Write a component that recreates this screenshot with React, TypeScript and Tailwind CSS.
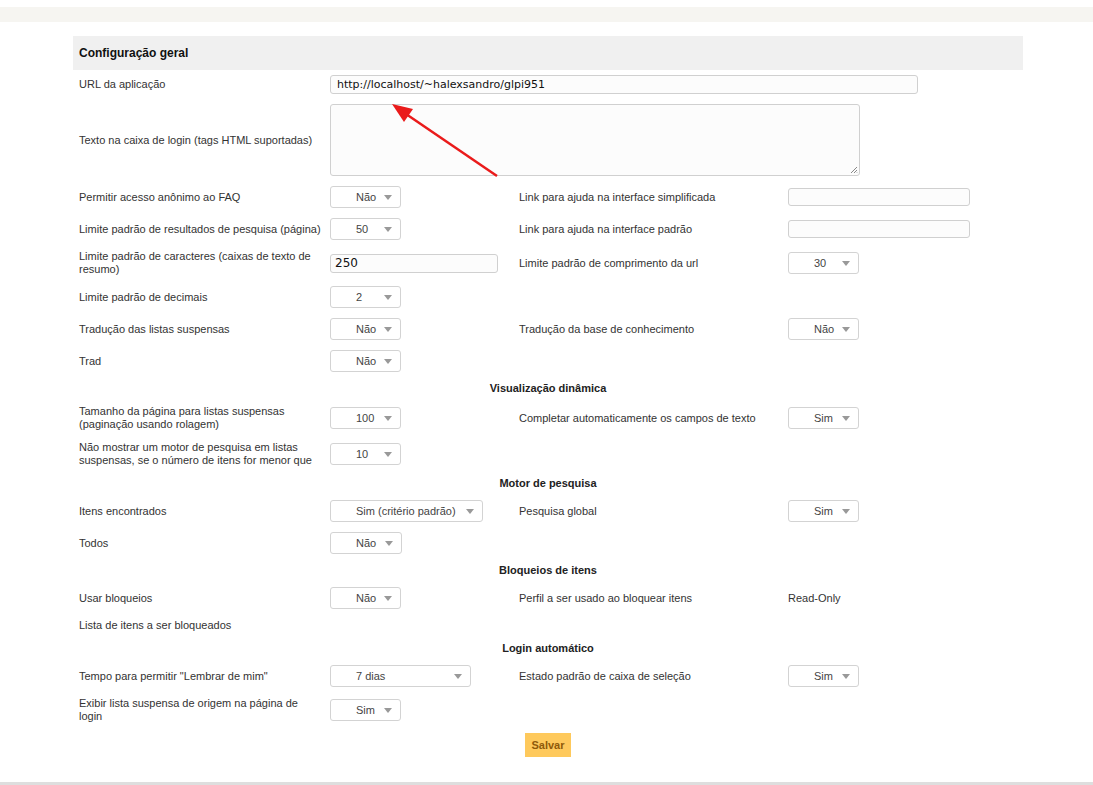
import React from "react";

const Arrow = () => (
  <svg width="8" height="5" viewBox="0 0 8 5" className="shrink-0">
    <path d="M0 0 L8 0 L4 5 Z" fill="#999" />
  </svg>
);

const Select = ({ value, w = "w-[71px]" }: { value: string; w?: string }) => (
  <div
    className={`${w} h-[22px] flex items-center justify-between pl-[25px] pr-[8px] bg-white border border-[#d3d3d3] rounded-[3px] text-[#444] text-[11px]`}
  >
    <span className="whitespace-nowrap">{value}</span>
    <Arrow />
  </div>
);

const TextInput = ({ value = "", w }: { value?: string; w: string }) => (
  <div
    className={`${w} h-[18px] flex items-center px-[5px] bg-[#fcfcfc] border border-[#d0d0d0] rounded-[3px] text-[#111] text-[11px] font-['DejaVu_Sans',sans-serif]`}
  >
    {value}
  </div>
);

const Cell = ({ children, first = false, span = "" }: { children?: React.ReactNode; first?: boolean; span?: string }) => (
  <div className={`${first ? "pl-[6px] pr-[5px]" : "px-[5px]"} py-[5px] flex items-center leading-[13px] whitespace-nowrap ${span}`}>
    {children}
  </div>
);

const Row = ({ children }: { children: React.ReactNode }) => (
  <div className="grid grid-cols-[252px_189px_269px_240px]">{children}</div>
);

const Heading = ({ children }: { children: React.ReactNode }) => (
  <div className="py-[5px] leading-[13px] text-center font-bold text-[#222]">{children}</div>
);

export default function App() {
  return (
    <div className="relative h-[785px] flex flex-col bg-white font-['Liberation_Sans',Arial,sans-serif] text-[11px] text-[#333] overflow-hidden">
      <div className="h-[7px]" />
      <div className="h-[15px] bg-[#f6f5f1]" />
      <div className="flex-1">
        <div className="ml-[73px] mt-[14px] w-[950px]">
          <div className="h-[34px] bg-[#f0f0f0] flex items-center pl-[6px] font-bold text-[12px] text-[#111]">
            Configuração geral
          </div>

          <Row>
            <Cell first>URL da aplicação</Cell>
            <Cell span="col-span-3">
              <div className="w-[588px] h-[19px] flex items-center px-[6px] bg-[#fcfcfc] border border-[#d0d0d0] rounded-[3px] text-[#111] text-[11px] font-['DejaVu_Sans',sans-serif]">
                http://localhost/~halexsandro/glpi951
              </div>
            </Cell>
          </Row>

          <Row>
            <Cell first>Texto na caixa de login (tags HTML suportadas)</Cell>
            <Cell span="col-span-3">
              <div className="relative w-[530px] h-[72px] bg-[#fcfcfc] border border-[#d0d0d0] rounded-[3px]">
                <svg width="9" height="9" viewBox="0 0 9 9" className="absolute right-[1px] bottom-[1px]">
                  <path d="M8 2 L2 8 M8 5 L5 8 M8 7.5 L7.5 8" stroke="#888" strokeWidth="1" />
                </svg>
              </div>
            </Cell>
          </Row>

          <Row>
            <Cell first>Permitir acesso anônimo ao FAQ</Cell>
            <Cell><Select value="Não" /></Cell>
            <Cell>Link para ajuda na interface simplificada</Cell>
            <Cell><TextInput w="w-[182px]" /></Cell>
          </Row>

          <Row>
            <Cell first>Limite padrão de resultados de pesquisa (página)</Cell>
            <Cell><Select value="50" /></Cell>
            <Cell>Link para ajuda na interface padrão</Cell>
            <Cell><TextInput w="w-[182px]" /></Cell>
          </Row>

          <Row>
            <Cell first>
              <span>Limite padrão de caracteres (caixas de texto de<br />resumo)</span>
            </Cell>
            <Cell>
              <div className="w-[168px] h-[19px] flex items-center px-[4px] bg-[#fcfcfc] border border-[#d0d0d0] rounded-[3px] text-[#111] text-[12px] font-['DejaVu_Sans',sans-serif]">
                250
              </div>
            </Cell>
            <Cell>Limite padrão de comprimento da url</Cell>
            <Cell><Select value="30" /></Cell>
          </Row>

          <Row>
            <Cell first>Limite padrão de decimais</Cell>
            <Cell><Select value="2" /></Cell>
            <Cell />
            <Cell />
          </Row>

          <Row>
            <Cell first>Tradução das listas suspensas</Cell>
            <Cell><Select value="Não" /></Cell>
            <Cell>Tradução da base de conhecimento</Cell>
            <Cell><Select value="Não" /></Cell>
          </Row>

          <Row>
            <Cell first>Trad</Cell>
            <Cell><Select value="Não" /></Cell>
            <Cell />
            <Cell />
          </Row>

          <Heading>Visualização dinâmica</Heading>

          <Row>
            <Cell first>
              <span>Tamanho da página para listas suspensas<br />(paginação usando rolagem)</span>
            </Cell>
            <Cell><Select value="100" /></Cell>
            <Cell>Completar automaticamente os campos de texto</Cell>
            <Cell><Select value="Sim" /></Cell>
          </Row>

          <Row>
            <Cell first>
              <span>Não mostrar um motor de pesquisa em listas<br />suspensas, se o número de itens for menor que</span>
            </Cell>
            <Cell><Select value="10" /></Cell>
            <Cell />
            <Cell />
          </Row>

          <Heading>Motor de pesquisa</Heading>

          <Row>
            <Cell first>Itens encontrados</Cell>
            <Cell><Select value="Sim (critério padrão)" w="w-[153px]" /></Cell>
            <Cell>Pesquisa global</Cell>
            <Cell><Select value="Sim" /></Cell>
          </Row>

          <Row>
            <Cell first>Todos</Cell>
            <Cell><Select value="Não" w="w-[72px]" /></Cell>
            <Cell />
            <Cell />
          </Row>

          <Heading>Bloqueios de itens</Heading>

          <Row>
            <Cell first>Usar bloqueios</Cell>
            <Cell><Select value="Não" /></Cell>
            <Cell>Perfil a ser usado ao bloquear itens</Cell>
            <Cell>Read-Only</Cell>
          </Row>

          <Row>
            <Cell first>Lista de itens a ser bloqueados</Cell>
            <Cell />
            <Cell />
            <Cell />
          </Row>

          <Heading>Login automático</Heading>

          <Row>
            <Cell first>Tempo para permitir "Lembrar de mim"</Cell>
            <Cell><Select value="7 dias" w="w-[141px]" /></Cell>
            <Cell>Estado padrão de caixa de seleção</Cell>
            <Cell><Select value="Sim" /></Cell>
          </Row>

          <Row>
            <Cell first>
              <span>Exibir lista suspensa de origem na página de<br />login</span>
            </Cell>
            <Cell><Select value="Sim" /></Cell>
            <Cell />
            <Cell />
          </Row>

          <div className="py-[5px] flex justify-center">
            <button className="h-[24px] w-[46px] bg-[#fec95c] text-[#8f5a0a] font-bold text-[11px]">
              Salvar
            </button>
          </div>
        </div>
      </div>
      <div className="h-[3px] bg-[#dedede]" />

      <svg
        width="1093"
        height="785"
        viewBox="0 0 1093 785"
        className="absolute left-0 top-0 pointer-events-none"
      >
        <line x1="497" y1="176" x2="406" y2="114" stroke="#ea1b1b" strokeWidth="2.5" />
        <polygon points="392,104 413,109 404,122" fill="#ea1b1b" />
      </svg>
    </div>
  );
}
